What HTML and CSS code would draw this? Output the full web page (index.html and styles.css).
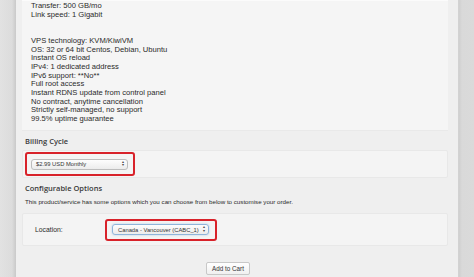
FILE: index.html
```html
<!DOCTYPE html>
<html>
<head>
<meta charset="utf-8">
<link rel="stylesheet" href="styles.css">
</head>
<body>
<div class="page">
  <div class="panel">
    <div class="desc">
      Transfer: 500 GB/mo<br>
      Link speed: 1 Gigabit<br>
      <br>
      <br>
      VPS technology: KVM/KiwiVM<br>
      OS: 32 or 64 bit Centos, Debian, Ubuntu<br>
      Instant OS reload<br>
      IPv4: 1 dedicated address<br>
      IPv6 support: **No**<br>
      Full root access<br>
      Instant RDNS update from control panel<br>
      No contract, anytime cancellation<br>
      Strictly self-managed, no support<br>
      99.5% uptime guarantee
    </div>

    <h2 class="heading heading-billing">Billing Cycle</h2>
    <div class="box box-billing">
      <div class="highlight hl-billing">
        <div class="select select-billing">
          <span class="select-text">$2.99 USD Monthly</span>
          <span class="arrows">&#9652;<br>&#9662;</span>
        </div>
      </div>
    </div>

    <h2 class="heading heading-config">Configurable Options</h2>
    <p class="intro">This product/service has some options which you can choose from below to customise your order.</p>
    <div class="box box-config">
      <span class="label">Location:</span>
      <div class="highlight hl-location">
        <div class="select select-location">
          <span class="select-text">Canada - Vancouver (CABC_1)</span>
          <span class="arrows">&#9652;<br>&#9662;</span>
        </div>
      </div>
    </div>

    <div class="actions">
      <span class="btn">Add to Cart</span>
    </div>
  </div>
</div>
</body>
</html>
```

FILE: styles.css
```css
html, body {
  margin: 0;
  padding: 0;
}
body {
  width: 474px;
  height: 277px;
  overflow: hidden;
  background: #dcdcdc;
  font-family: "Liberation Sans", Arial, sans-serif;
  color: #333;
}
.page {
  display: flex;
  height: 277px;
  background: linear-gradient(to right, #e2e2e2 0, #dcdcdc 12px, #c9c9c9 16px, #d5d5d5 458px, #cfcfcf 459px, #d9d9d9 462px, #dadada 474px);
}
.panel {
  margin-left: 16px;
  width: 442px;
  height: 277px;
  background: #efefef;
  box-sizing: border-box;
  padding: 0 10px 0 6px;
  display: flex;
  flex-direction: column;
}
.desc {
  background: #f5f5f5;
  border-top: 1px solid #fbfbfb;
  border-bottom: 1px solid #e9e9e9;
  padding: 1px 9px 6px 9px;
  font-size: 7.6px;
  line-height: 8.7px;
  color: #2a2a2a;
  height: 122px;
  white-space: nowrap;
}
.heading {
  margin: 5px 0 0 3px;
  font-family: "Open Sans", "DejaVu Sans", sans-serif;
  font-weight: 600;
  font-size: 7.5px;
  line-height: 11px;
  color: #3a3a3a;
}
.box {
  background: #f4f4f4;
  border: 1px solid #e8e8e8;
  border-radius: 2px;
  display: flex;
  align-items: center;
}
.box-billing {
  margin-top: 3px;
  height: 26px;
  padding-left: 2px;
}
.highlight {
  border: 2px solid #d8222a;
  border-radius: 3px;
  box-sizing: border-box;
  display: flex;
  align-items: center;
}
.hl-billing {
  width: 110px;
  height: 24px;
  padding-left: 4px;
}
.select {
  height: 11px;
  box-sizing: border-box;
  border: 1px solid #bdbdbd;
  border-radius: 3px;
  background: linear-gradient(#fdfdfd, #ececec);
  display: flex;
  align-items: center;
  justify-content: space-between;
  padding: 0 3px 0 4px;
  font-size: 5.8px;
  color: #333;
  white-space: nowrap;
}
.select-billing {
  width: 97px;
}
.arrows {
  font-size: 3.6px;
  line-height: 3.2px;
  color: #444;
  text-align: center;
}
.heading-config {
  margin-top: 5px;
}
.intro {
  margin: 3px 0 0 3px;
  font-size: 6.2px;
  line-height: 9px;
  color: #2a2a2a;
  white-space: nowrap;
}
.box-config {
  margin-top: 7px;
  height: 31px;
}
.label {
  font-size: 6.8px;
  margin-left: 12px;
  width: 70px;
  color: #2a2a2a;
}
.hl-location {
  width: 112px;
  height: 22px;
  padding-left: 5px;
}
.select-location {
  width: 97px;
  border-color: #8fb5da;
  box-shadow: 0 0 2px #a9c8e6;
  padding-left: 5px;
}
.actions {
  display: flex;
  justify-content: center;
  margin-top: 16px;
  padding-right: 14px;
}
.btn {
  font-size: 6.3px;
  line-height: 11px;
  padding: 0 5px;
  border: 1px solid #c8c8c8;
  border-radius: 2px;
  background: linear-gradient(#ffffff, #f0f0f0);
  color: #333;
  height: 11px;
}
```
